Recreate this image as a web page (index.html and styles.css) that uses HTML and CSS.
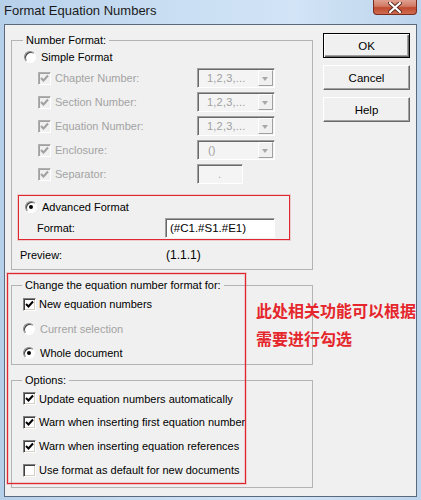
FILE: index.html
```html
<!DOCTYPE html>
<html>
<head>
<meta charset="utf-8">
<link rel="stylesheet" href="styles.css">
</head>
<body>
<div class="window">
  <div class="titlebar">
    <span class="title">Format Equation Numbers</span>
    <span class="close"><svg width="14" height="11" viewBox="0 0 14 11"><path d="M2 1 L12 10 M12 1 L2 10" stroke="#5a2a20" stroke-width="4" stroke-linecap="round"/><path d="M2 1 L12 10 M12 1 L2 10" stroke="#fff" stroke-width="2.2" stroke-linecap="round"/></svg></span>
  </div>
  <div class="client">
    <div class="leftcol">
      <fieldset class="group g1">
        <legend>Number Format:</legend>
        <div class="row simple"><span class="radio"></span><span class="lbl">Simple Format</span></div>
        <div class="opts">
          <div class="row opt"><span class="cb dis"><svg viewBox="0 0 9 9"><path d="M1 4 L3.5 6.5 L8 1.5" /></svg></span><span class="lbl dtext">Chapter Number:</span><span class="combo"><span class="val">1,2,3,...</span><span class="arrow"></span></span></div>
          <div class="row opt"><span class="cb dis"><svg viewBox="0 0 9 9"><path d="M1 4 L3.5 6.5 L8 1.5" /></svg></span><span class="lbl dtext">Section Number:</span><span class="combo"><span class="val">1,2,3,...</span><span class="arrow"></span></span></div>
          <div class="row opt"><span class="cb dis"><svg viewBox="0 0 9 9"><path d="M1 4 L3.5 6.5 L8 1.5" /></svg></span><span class="lbl dtext">Equation Number:</span><span class="combo"><span class="val">1,2,3,...</span><span class="arrow"></span></span></div>
          <div class="row opt"><span class="cb dis"><svg viewBox="0 0 9 9"><path d="M1 4 L3.5 6.5 L8 1.5" /></svg></span><span class="lbl dtext">Enclosure:</span><span class="combo"><span class="val paren">()</span><span class="arrow"></span></span></div>
          <div class="row opt"><span class="cb dis"><svg viewBox="0 0 9 9"><path d="M1 4 L3.5 6.5 L8 1.5" /></svg></span><span class="lbl dtext">Separator:</span><span class="sep"><span class="val">.</span></span></div>
        </div>
        <div class="adv">
          <div class="row advrow"><span class="radio on"></span><span class="lbl">Advanced Format</span></div>
          <div class="row fmtrow"><span class="lbl fmtlbl">Format:</span><span class="input">(#C1.#S1.#E1)</span></div>
        </div>
        <div class="row preview"><span class="lbl prevlbl">Preview:</span><span class="prevval">(1.1.1)</span></div>
      </fieldset>
      <fieldset class="group g2">
        <legend>Change the equation number format for:</legend>
        <div class="row r1"><span class="cb"><svg viewBox="0 0 9 9"><path d="M1 4 L3.5 6.5 L8 1.5" /></svg></span><span class="lbl">New equation numbers</span></div>
        <div class="row r2"><span class="radio"></span><span class="lbl dtext">Current selection</span></div>
        <div class="row r3"><span class="radio on"></span><span class="lbl">Whole document</span></div>
      </fieldset>
      <fieldset class="group g3">
        <legend>Options:</legend>
        <div class="row o1"><span class="cb"><svg viewBox="0 0 9 9"><path d="M1 4 L3.5 6.5 L8 1.5" /></svg></span><span class="lbl">Update equation numbers automatically</span></div>
        <div class="row o2"><span class="cb"><svg viewBox="0 0 9 9"><path d="M1 4 L3.5 6.5 L8 1.5" /></svg></span><span class="lbl">Warn when inserting first equation number</span></div>
        <div class="row o2"><span class="cb"><svg viewBox="0 0 9 9"><path d="M1 4 L3.5 6.5 L8 1.5" /></svg></span><span class="lbl">Warn when inserting equation references</span></div>
        <div class="row o2"><span class="cb empty"></span><span class="lbl">Use format as default for new documents</span></div>
      </fieldset>
    </div>
    <div class="rightcol">
      <div class="btn default">OK</div>
      <div class="btn">Cancel</div>
      <div class="btn">Help</div>
    </div>
    <div class="annot-box"></div>
    <div class="annot-text">此处相关功能可以根据<br>需要进行勾选</div>
  </div>
</div>
</body>
</html>
```
FILE: styles.css
```css
html, body {
  margin: 0;
  padding: 0;
}
body {
  width: 421px;
  height: 500px;
  overflow: hidden;
  font-family: "Liberation Sans", Arial, sans-serif;
  font-size: 11px;
  color: #000;
}
.window {
  width: 421px;
  height: 500px;
  box-sizing: border-box;
  background: linear-gradient(90deg, #b7d0ea 0%, #c9def3 40%, #d2e4f6 70%, #bcd4ec 100%);
  padding: 0 4px 3px 4px;
  display: flex;
  flex-direction: column;
}
.titlebar {
  height: 24px;
  display: flex;
  justify-content: space-between;
  align-items: flex-start;
  flex-shrink: 0;
}
.title {
  font-size: 13px;
  color: #1a1a1a;
  padding-top: 3px;
  padding-left: 0;
}
.close {
  width: 44px;
  height: 15px;
  box-sizing: border-box;
  border: 1px solid #7a2c1e;
  border-top: none;
  border-radius: 0 0 4px 4px;
  background: linear-gradient(180deg, #e0a090 0%, #d07a64 45%, #bf4a30 55%, #d06c50 100%);
  display: flex;
  align-items: center;
  justify-content: center;
}
.close svg { display: block; }
.client {
  flex: 1;
  position: relative;
  background: #f0f0f0;
  border: 1px solid #5a6a7c;
  display: flex;
  align-items: flex-start;
}
.leftcol {
  margin-left: 6px;
  margin-top: 8px;
  width: 302px;
  display: flex;
  flex-direction: column;
}
.group {
  margin: 0;
  padding: 0 0 0 11px;
  border: 1px solid #b4b4b4;
  min-width: 0;
}
.group legend {
  margin-left: -1px;
  padding: 0 3px;
  line-height: 14px;
  height: 14px;
}
.row {
  display: flex;
  align-items: center;
}
.lbl {
  white-space: nowrap;
}
.dtext { color: #a3a3a3; }

/* radio */
.radio {
  width: 12px;
  height: 12px;
  border-radius: 50%;
  box-sizing: border-box;
  border: 1px solid;
  border-color: #8a8a8a #ffffff #ffffff #8a8a8a;
  background: #fff;
  box-shadow: inset 1px 1px 0 #404040;
  margin-right: 5px;
  position: relative;
  flex-shrink: 0;
}
.radio.on::after {
  content: "";
  position: absolute;
  left: 3px;
  top: 3px;
  width: 4px;
  height: 4px;
  border-radius: 50%;
  background: #000;
}
/* checkbox */
.cb {
  width: 13px;
  height: 13px;
  box-sizing: border-box;
  border: 1px solid;
  border-color: #808080 #ffffff #ffffff #808080;
  box-shadow: inset 1px 1px 0 #404040, inset -1px -1px 0 #d4d0c8;
  background: #fff;
  margin-right: 3px;
  flex-shrink: 0;
  display: flex;
  align-items: center;
  justify-content: center;
}
.cb svg {
  width: 9px;
  height: 9px;
  display: block;
}
.cb svg path {
  fill: none;
  stroke: #000;
  stroke-width: 2;
}
.cb.dis {
  background: #f0f0f0;
  border-color: #b0b0b0 #ffffff #ffffff #b0b0b0;
  box-shadow: inset 1px 1px 0 #a0a0a0;
  margin-right: 4px;
}
.cb.dis svg path { stroke: #a0a0a0; }

/* group 1 */
.g1 { padding-left: 12px; }
.simple {
  height: 19px;
  padding-left: 0;
}
.opts {
  padding-left: 14px;
}
.opt {
  height: 24px;
}
.opt .lbl {
  width: 142px;
}
.combo {
  width: 78px;
  height: 20px;
  box-sizing: border-box;
  border: 1px solid;
  border-color: #a0a0a0 #ffffff #ffffff #a0a0a0;
  box-shadow: inset 1px 1px 0 #696969;
  background: #f4f4f4;
  display: flex;
  align-items: center;
  justify-content: space-between;
  padding: 0 1px 0 0;
}
.val {
  color: #a0a0a0;
  padding-left: 9px;
  letter-spacing: 0.2px;
}
.val.paren { padding-left: 10px; }
.arrow {
  width: 15px;
  height: 16px;
  box-sizing: border-box;
  border: 1px solid;
  border-color: #ffffff #a0a0a0 #a0a0a0 #ffffff;
  background: #f0f0f0;
  position: relative;
}
.arrow::after {
  content: "";
  position: absolute;
  left: 3px;
  top: 6px;
  border-left: 3.5px solid transparent;
  border-right: 3.5px solid transparent;
  border-top: 4px solid #a8a8a8;
}
.sep {
  width: 46px;
  height: 20px;
  box-sizing: border-box;
  border: 1px solid;
  border-color: #a0a0a0 #ffffff #ffffff #a0a0a0;
  box-shadow: inset 1px 1px 0 #696969;
  background: #f4f4f4;
  display: flex;
  align-items: center;
}
.sep .val { padding-left: 20px; }
.adv {
  margin: 9px 0 0 -6px;
  width: 272px;
  height: 45px;
  box-sizing: border-box;
  border: 1px solid #e0262e;
  box-shadow: 0 0 0 1px rgba(224, 38, 46, 0.18);
  padding: 1px 0 0 6px;
}
.advrow { height: 20px; }
.fmtrow { height: 21px; }
.fmtlbl {
  width: 140px;
  padding-left: 12px;
  box-sizing: border-box;
}
.input {
  width: 110px;
  height: 20px;
  box-sizing: border-box;
  border: 1px solid;
  border-color: #a0a0a0 #ffffff #ffffff #a0a0a0;
  box-shadow: inset 1px 1px 0 #696969;
  background: #fff;
  display: flex;
  align-items: center;
  padding-left: 4px;
  font-size: 11.5px;
}
.preview {
  height: 20px;
  margin-top: 5px;
  margin-bottom: 4px;
  margin-left: -4px;
}
.prevlbl {
  width: 146px;
}
.prevval { font-size: 12px; }

/* group 2 */
.g2 { margin-top: 8px; }
.r1 { height: 24px; }
.r2 { height: 26px; }
.r3 { height: 22px; }

/* group 3 */
.g3 { margin-top: 8px; padding-bottom: 5px; }
.o1 { height: 23px; }
.o2 { height: 24px; }

/* buttons */
.rightcol {
  margin-left: 10px;
  margin-top: 8px;
  display: flex;
  flex-direction: column;
  gap: 7px;
}
.btn {
  width: 87px;
  height: 25px;
  box-sizing: border-box;
  border: 1px solid;
  border-color: #ffffff #696969 #696969 #ffffff;
  box-shadow: inset -1px -1px 0 #a0a0a0;
  background: #f0f0f0;
  display: flex;
  align-items: center;
  justify-content: center;
  font-size: 11.5px;
}
.btn.default {
  border: 1px solid #000;
  box-shadow: inset 1px 1px 0 #fff, inset -1px -1px 0 #696969, inset -2px -2px 0 #a0a0a0;
}

/* annotations */
.annot-box {
  position: absolute;
  left: 2px;
  top: 248px;
  width: 239px;
  height: 211px;
  box-sizing: border-box;
  border: 1px solid #e0262e;
  box-shadow: 0 0 0 1px rgba(224, 38, 46, 0.18), inset 0 0 0 1px rgba(224, 38, 46, 0.18);
  pointer-events: none;
  z-index: 2;
}
.annot-text {
  position: absolute;
  left: 251px;
  top: 271px;
  font-family: "Noto Sans CJK SC", sans-serif;
  font-weight: bold;
  font-size: 16px;
  line-height: 28px;
  color: #e5262c;
}
```
